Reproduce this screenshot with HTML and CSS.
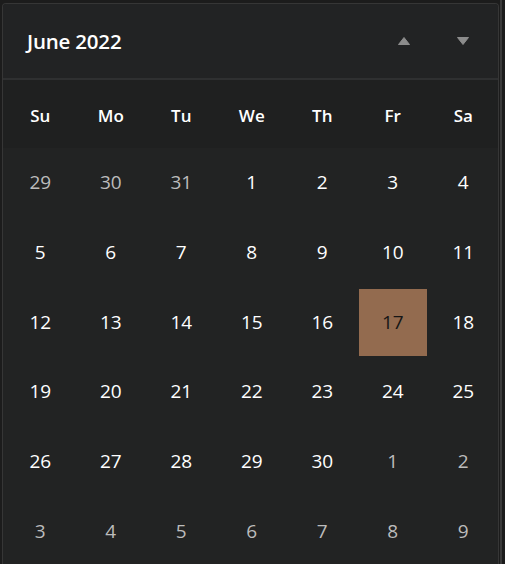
FILE: index.html
```html
<!DOCTYPE html>
<html>
<head>
<meta charset="utf-8">
<link rel="stylesheet" href="styles.css">
</head>
<body>
<div class="frame">
  <div class="panel">
    <div class="header">
      <div class="title">June 2022</div>
      <div class="navs">
        <svg class="nav" width="14" height="10" viewBox="0 0 14 10"><path d="M7 1.5 L12.5 8.5 L1.5 8.5 Z" fill="#8c8c8c" stroke="#8c8c8c" stroke-width="1" stroke-linejoin="round"/></svg>
        <svg class="nav" width="14" height="10" viewBox="0 0 14 10"><path d="M1.5 1.5 L12.5 1.5 L7 8.5 Z" fill="#8c8c8c" stroke="#8c8c8c" stroke-width="1" stroke-linejoin="round"/></svg>
      </div>
    </div>
    <div class="weekdays">
      <div>Su</div><div>Mo</div><div>Tu</div><div>We</div><div>Th</div><div>Fr</div><div>Sa</div>
    </div>
    <div class="days">
      <div class="day out">29</div><div class="day out">30</div><div class="day out">31</div><div class="day">1</div><div class="day">2</div><div class="day">3</div><div class="day">4</div>
      <div class="day">5</div><div class="day">6</div><div class="day">7</div><div class="day">8</div><div class="day">9</div><div class="day">10</div><div class="day">11</div>
      <div class="day">12</div><div class="day">13</div><div class="day">14</div><div class="day">15</div><div class="day">16</div><div class="day selected">17</div><div class="day">18</div>
      <div class="day">19</div><div class="day">20</div><div class="day">21</div><div class="day">22</div><div class="day">23</div><div class="day">24</div><div class="day">25</div>
      <div class="day">26</div><div class="day">27</div><div class="day">28</div><div class="day">29</div><div class="day">30</div><div class="day out">1</div><div class="day out">2</div>
      <div class="day out">3</div><div class="day out">4</div><div class="day out">5</div><div class="day out">6</div><div class="day out">7</div><div class="day out">8</div><div class="day out">9</div>
    </div>
  </div>
  <div class="edge"></div>
</div>
</body>
</html>
```

FILE: styles.css
```css
html, body {
  margin: 0;
  padding: 0;
  background: #1c1c1c;
  overflow: hidden;
  height: 564px;
}
body {
  font-family: "Open Sans", "Noto Sans", sans-serif;
  color: #ffffff;
}
.frame {
  display: flex;
  padding: 3px 0 0 2px;
  height: 564px;
  box-sizing: border-box;
}
.panel {
  width: 497px;
  flex: none;
  border: 1px solid #363636;
  border-bottom: none;
  border-radius: 4px 4px 0 0;
  background: #222323;
  box-sizing: border-box;
  overflow: hidden;
}
.edge {
  width: 2px;
  margin-left: 1px;
  margin-top: -3px;
  background: #3a3a3a;
}
.header {
  height: 74px;
  display: flex;
  align-items: center;
  justify-content: space-between;
  padding: 0 28px 0 24px;
  border-bottom: 2px solid #2f3031;
  background: #222324;
}
.title {
  font-size: 20.5px;
  font-weight: 600;
  letter-spacing: -0.2px;
  margin-top: -1px;
}
.navs {
  display: flex;
  gap: 45px;
  align-items: center;
  margin-top: -1px;
}
.nav {
  display: block;
}
.weekdays {
  display: grid;
  grid-template-columns: repeat(7, 70.5px);
  padding: 0 2px;
  height: 68px;
  align-items: center;
  background: #1f2020;
  font-size: 17px;
  font-weight: 600;
}
.weekdays div {
  text-align: center;
  padding-top: 2px;
}
.days {
  display: grid;
  grid-template-columns: repeat(7, 70.5px);
  grid-auto-rows: 69.7px;
  padding: 0 2px;
  font-size: 19px;
}
.day {
  display: flex;
  align-items: center;
  justify-content: center;
  margin: 1.5px 1.25px;
  padding-bottom: 1px;
}
.day.out {
  color: #bcbcbc;
}
.day.selected {
  background: #936b4f;
  color: #161616;
}
```
